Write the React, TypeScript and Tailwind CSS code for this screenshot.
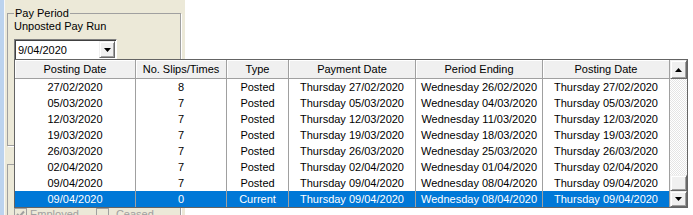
import React from 'react';

type Row = [string, string, string, string, string, string];

const rows: Row[] = [
    ['27/02/2020', '8', 'Posted', 'Thursday 27/02/2020', 'Wednesday 26/02/2020', 'Thursday 27/02/2020'],
    ['05/03/2020', '7', 'Posted', 'Thursday 05/03/2020', 'Wednesday 04/03/2020', 'Thursday 05/03/2020'],
    ['12/03/2020', '7', 'Posted', 'Thursday 12/03/2020', 'Wednesday 11/03/2020', 'Thursday 12/03/2020'],
    ['19/03/2020', '7', 'Posted', 'Thursday 19/03/2020', 'Wednesday 18/03/2020', 'Thursday 19/03/2020'],
    ['26/03/2020', '7', 'Posted', 'Thursday 26/03/2020', 'Wednesday 25/03/2020', 'Thursday 26/03/2020'],
    ['02/04/2020', '7', 'Posted', 'Thursday 02/04/2020', 'Wednesday 01/04/2020', 'Thursday 02/04/2020'],
    ['09/04/2020', '7', 'Posted', 'Thursday 09/04/2020', 'Wednesday 08/04/2020', 'Thursday 09/04/2020'],
    ['09/04/2020', '0', 'Current', 'Thursday 09/04/2020', 'Wednesday 08/04/2020', 'Thursday 09/04/2020'],
];

const headers = ['Posting Date', 'No. Slips/Times', 'Type', 'Payment Date', 'Period Ending', 'Posting Date'];

const Arrow: React.FC<{ up?: boolean }> = ({ up }) => (
    <svg width="7" height="4" viewBox="0 0 7 4" className="block">
        {up ? <path d="M3.5 0 L7 4 L0 4 Z" fill="#000" /> : <path d="M0 0 L7 0 L3.5 4 Z" fill="#000" />}
    </svg>
);

const ScrollButton: React.FC<{ up?: boolean; className?: string }> = ({ up, className }) => (
    <div
        className={`flex items-center justify-center bg-[#f0f0f0] border border-t-[#f0f0f0] border-l-[#f0f0f0] border-r-[#696969] border-b-[#696969] shadow-[inset_1px_1px_0_#fff,inset_-1px_-1px_0_#a0a0a0] ${className ?? ''}`}
    >
        <Arrow up={up} />
    </div>
);

const CheckBox: React.FC<{ checked?: boolean }> = ({ checked }) => (
    <div className="w-[13px] h-[13px] border border-[#a0a0a0] bg-[#ece9d8] flex items-center justify-center shrink-0">
        {checked && (
            <svg width="9" height="9" viewBox="0 0 9 9">
                <path d="M1 4 L3.5 6.5 L8 1.5" stroke="#a0a0a0" strokeWidth="2" fill="none" />
            </svg>
        )}
    </div>
);

const PayRunPopup: React.FC = () => (
    <div className="absolute left-[14px] top-[59px] flex border border-[#646464] bg-white">
        <div className="grid grid-cols-[121px_91px_62px_127px_127px_127px]">
            {headers.map((h, i) => (
                <div
                    key={i}
                    className="h-[19px] leading-[18px] text-center bg-[#f0f0f0] border-r border-b border-[#a0a0a0] shadow-[inset_1px_1px_0_#fff]"
                >
                    {h}
                </div>
            ))}
            {rows.map((row, r) => {
                const selected = r === rows.length - 1;
                return row.map((cell, c) => (
                    <div
                        key={`${r}-${c}`}
                        className={`h-[16px] leading-[16px] text-center border-r border-[#a0a0a0] whitespace-nowrap ${
                            selected ? 'bg-[#0078d7] text-white' : 'text-black'
                        }`}
                    >
                        {cell}
                    </div>
                ));
            })}
        </div>
        <div className="flex flex-col w-[17px]">
            <ScrollButton up className="h-[19px]" />
            <div className="flex-1 bg-[repeating-conic-gradient(#e4e4e4_0_25%,#ffffff_0_50%)] bg-[length:2px_2px]" />
            <div className="h-[16px] bg-[#f0f0f0] border border-t-[#f0f0f0] border-l-[#f0f0f0] border-r-[#696969] border-b-[#696969] shadow-[inset_1px_1px_0_#fff,inset_-1px_-1px_0_#a0a0a0]" />
            <ScrollButton className="h-[16px]" />
        </div>
    </div>
);

const App: React.FC = () => {
    return (
        <div className="relative flex w-[693px] h-[215px] overflow-hidden bg-white text-[11px] text-black font-['Liberation_Sans',Arial,sans-serif]">
            <div className="w-[4px] bg-[#bcd3ee] shrink-0" />
            <div className="w-[1px] bg-[#f8f8f8] shrink-0" />
            <div className="w-[180px] shrink-0 bg-[#ece9d8] pl-[2px] pt-[7px] flex flex-col">
                <fieldset className="shrink-0 w-[174px] h-[139px] border border-[#a0a0a0] px-[6px] shadow-[1px_1px_0_#fff]">
                    <legend className="px-[1px] leading-[13px]">Pay Period</legend>
                    <div className="leading-[13px]">Unposted Pay Run</div>
                    <div className="mt-[6px] w-[103px] h-[21px] flex items-center bg-white border border-t-[#808080] border-l-[#808080] border-r-white border-b-white shadow-[inset_1px_1px_0_#404040]">
                        <span className="flex-1 pl-[3px] pt-[1px]">9/04/2020</span>
                        <ScrollButton className="w-[16px] h-[17px] mr-[1px]" />
                    </div>
                </fieldset>
                <fieldset className="shrink-0 mt-[18px] w-[174px] h-[60px] border border-[#a0a0a0] px-[6px] shadow-[1px_1px_0_#fff]">
                    <div className="h-[43px]" />
                    <div className="flex items-center text-[#a0a0a0] leading-[13px]">
                        <CheckBox checked />
                        <span className="ml-[3px]">Employed</span>
                        <div className="ml-[17px]">
                            <CheckBox />
                        </div>
                        <span className="ml-[7px]">Ceased</span>
                    </div>
                </fieldset>
            </div>
            <div className="flex-1" />
            <PayRunPopup />
        </div>
    );
};

export default App;
